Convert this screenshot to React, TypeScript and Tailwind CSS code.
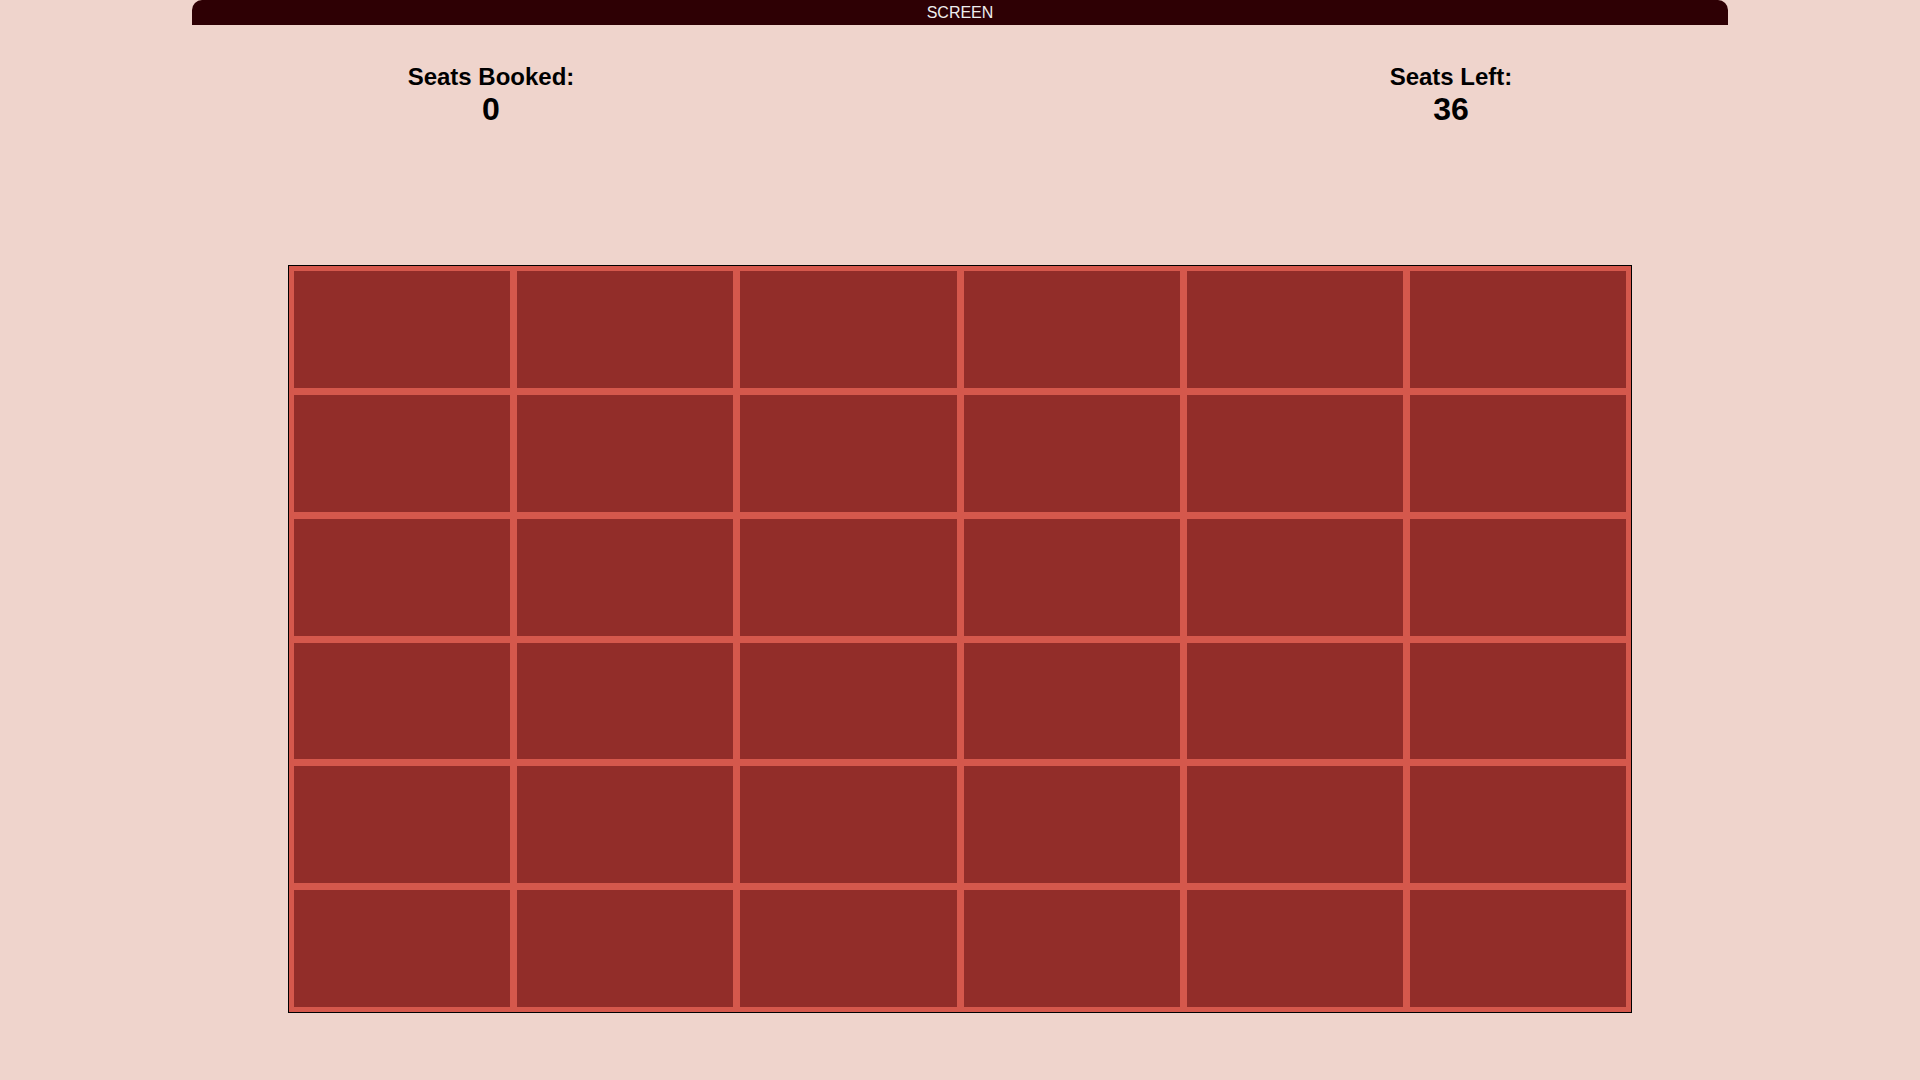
import React from 'react';

const ROWS = 6;
const COLS = 6;

export default function App() {
  const total = ROWS * COLS;
  const booked = 0;
  const seats = Array.from({ length: total }, (_, i) => i);

  return (
    <div
      className="min-h-[1080px] w-full bg-[#efd4cc] text-black"
      style={{ fontFamily: '"Liberation Sans", Arial, sans-serif' }}
    >
      {/* screen */}
      <div className="mx-auto h-[25px] w-[80%] rounded-t-[10px] bg-[#2e0004] text-center text-[16px] leading-[25px] text-[#eeeeee]">
        SCREEN
      </div>

      {/* counters */}
      <div className="mt-[38px] flex justify-around">
        <div className="text-center font-bold">
          <div className="text-[24px] leading-[28px]">Seats Booked:</div>
          <div className="mt-[2px] text-[32px] leading-[32px]">{booked}</div>
        </div>
        <div className="text-center font-bold">
          <div className="text-[24px] leading-[28px]">Seats Left:</div>
          <div className="mt-[2px] text-[32px] leading-[32px]">{total - booked}</div>
        </div>
      </div>

      {/* seat grid */}
      <div className="mx-auto mt-[140px] grid h-[748px] w-[70%] grid-cols-6 grid-rows-6 gap-[7px] border border-black bg-[#d5584c] p-[5px]">
        {seats.map((s) => (
          <div key={s} className="bg-[#922d29]" />
        ))}
      </div>
    </div>
  );
}
